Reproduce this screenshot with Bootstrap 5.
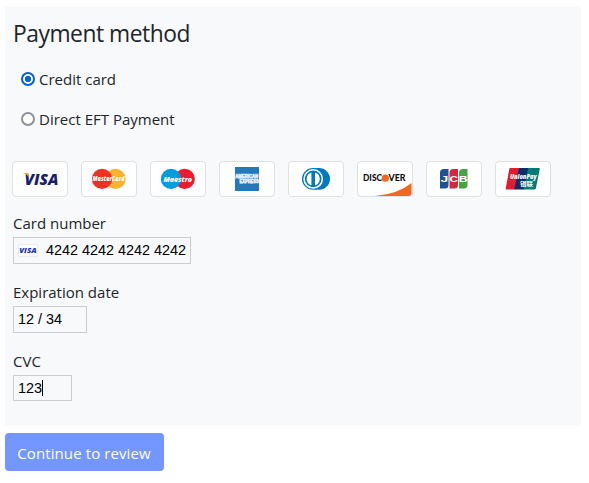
<!DOCTYPE html>
<html lang="en">
<head>
<meta charset="utf-8">
<meta name="viewport" content="width=device-width, initial-scale=1">
<title>Payment method</title>
<link href="https://cdn.jsdelivr.net/npm/bootstrap@5.3.0/dist/css/bootstrap.min.css" rel="stylesheet">
<style>
  body { font-family: "Open Sans", "Noto Sans", sans-serif; font-size: 15px; line-height: 24px; color: #212529; padding: 7px 8px 0 5px; }
  .pay-panel { height: 418px; background: #f8f9fb; padding: 0 8px; }
  .pay-title { font-size: 22.8px; line-height: 30px; padding: 12px 0 18px; font-weight: 400; letter-spacing: -.46px; }
  .pay-option { height: 24px; margin: 0 0 16px 8px; gap: 4px; }
  .pay-radio { appearance: none; width: 14px; height: 14px; border: 2px solid #8f8f9d; border-radius: 50%; background: #fff; margin: 0; }
  .pay-radio:checked { border-color: #0060df; background: radial-gradient(circle, #0060df 2.8px, #fff 3.5px); }
  .brand-row { gap: 13px; margin: 30px 0 15px -1px; height: 36px; }
  .brand-tile { width: 56px; height: 36px; background: #fff; border: 1px solid #dfe0e2; border-radius: 4px; }
  .brand-tile svg { display: block; margin: -1px; width: 56px; height: 36px; }
  .brand-text { font-family: "Open Sans", sans-serif; font-weight: 800; font-style: italic; }
  .pay-group { margin-bottom: 17px; }
  .pay-label { display: block; height: 25px; line-height: 23px; }
  .pay-field { border: 1px solid #ccc; height: 27px; padding: 0 4px; font: 14.4px/25px "Liberation Sans", Arial, sans-serif; color: #000; background: transparent; }
  .field-number { width: 178px; gap: 8px; }
  .field-expiry { width: 74px; }
  .field-cvc { width: 59px; height: 26px; }
  .text-caret { width: 1px; height: 16px; background: #000; }
  .btn-review { width: 159px; height: 38px; margin-top: 8px; padding: 3px 1px 0 0; border: 0; border-radius: 4px; background: #7496ff; color: #fff; font-size: 15px; letter-spacing: .1px; }
</style>
</head>
<body>
<main>
  <section class="pay-panel">
    <h4 class="pay-title mb-0">Payment method</h4>
    <div class="pay-option d-flex align-items-center"><input class="pay-radio" type="radio" name="method" id="m1" checked><label for="m1">Credit card</label></div>
    <div class="pay-option d-flex align-items-center mb-0"><input class="pay-radio" type="radio" name="method" id="m2"><label for="m2">Direct EFT Payment</label></div>
    <div class="brand-row d-flex">
      <div class="brand-tile"><svg viewBox="0 0 56 36"><text class="brand-text" x="12.500" y="23.800" font-size="16.300" textLength="34" lengthAdjust="spacingAndGlyphs" fill="#1a1f71">VISA</text><path d="M10.500 12h4.700q1.200 0 1.500 1.200l.6 3.600q-1.800-3.500-6.800-4.800z" fill="#f7a823"/></svg></div>
      <div class="brand-tile"><svg viewBox="0 0 56 36"><circle cx="34.500" cy="17.900" r="10.200" fill="#fbb231"/><circle cx="21" cy="17.900" r="10.200" fill="#ee3124"/><text class="brand-text" x="11.500" y="20.300" font-size="6.800" textLength="32" lengthAdjust="spacingAndGlyphs" fill="#fff">MasterCard</text></svg></div>
      <div class="brand-tile"><svg viewBox="0 0 56 36"><circle cx="34.700" cy="17.900" r="10.200" fill="#ed1b2e"/><circle cx="21" cy="17.900" r="10.200" fill="#009ddc"/><text class="brand-text" x="13.500" y="20.500" font-size="7.500" textLength="28.500" lengthAdjust="spacingAndGlyphs" fill="#fff">Maestro</text></svg></div>
      <div class="brand-tile"><svg viewBox="0 0 56 36"><path d="M16 6h24v24H16z" fill="#2478bd"/><g fill="none" stroke="#e3eef7" stroke-width=".75" font-family="Liberation Sans" font-weight="700" font-size="5"><text x="16.200" y="16.800" textLength="23" lengthAdjust="spacingAndGlyphs">AMERICAN</text><text x="20.500" y="21.500" textLength="19.300" lengthAdjust="spacingAndGlyphs">EXPRESS</text></g></svg></div>
      <div class="brand-tile"><svg viewBox="0 0 56 36"><path d="M25 7h6a11 10.900 0 0 1 0 21.800h-6a11 10.900 0 0 1 0-21.800z" fill="#0079c1"/><circle cx="25.200" cy="17.900" r="9.900" fill="#fff"/><circle cx="25.200" cy="17.900" r="8.300" fill="#0079c1"/><path d="M23.400 11.500v12.800a6.700 6.700 0 0 1 0-12.800zM27 11.500v12.800a6.700 6.700 0 0 0 0-12.800z" fill="#fff"/></svg></div>
      <div class="brand-tile"><svg viewBox="0 0 56 36"><path d="M18 35Q41 33 54.500 22v10q0 3-3 3z" fill="#f26722"/><g font-family="Lato" font-weight="900" font-size="9" fill="#111"><text x="6" y="20.400" textLength="19" lengthAdjust="spacingAndGlyphs">DISC</text><text x="31.500" y="20.400" textLength="17" lengthAdjust="spacingAndGlyphs">VER</text></g><circle cx="28.300" cy="17.200" r="3.600" fill="#f26722"/></svg></div>
      <div class="brand-tile"><svg viewBox="0 0 56 36"><path d="M18 8h4.500v16q0 3.500-3.500 3.500h-5V11.500q0-3.500 4-3.500z" fill="#205297"/><path d="M27.500 8H32v16q0 3.500-3.500 3.500h-5V11.500q0-3.500 4-3.500z" fill="#d6273b"/><path d="M37 8h4.500v16q0 3.500-3.500 3.500h-5V11.500q0-3.500 4-3.500z" fill="#45a543"/><g fill="#fff" font-family="Liberation Sans" font-weight="700" font-size="9"><text x="14.500" y="21" textLength="7.800" lengthAdjust="spacingAndGlyphs">J</text><text x="23.500" y="21" textLength="8.500" lengthAdjust="spacingAndGlyphs">C</text><text x="32.700" y="21" textLength="8.800" lengthAdjust="spacingAndGlyphs">B</text></g></svg></div>
      <div class="brand-tile"><svg viewBox="0 0 56 36"><path d="M15 7h10l-4.500 21.500H11.500q-1 0-.8-1L14.300 8q.2-1 .7-1z" fill="#e21b2d"/><path d="M25 7h9l-4.500 21.500h-9.300q-1 0-.8-1L23.700 8q.2-1 1.300-1z" fill="#0b2f6c"/><path d="M34 7h10q1 0 .8 1l-4 19.500q-.2 1-1.300 1h-9.700q-1 0-.8-1L33 8q.2-1 1-1z" fill="#017b74"/><text class="brand-text" x="15" y="17.500" font-size="6" textLength="26.500" lengthAdjust="spacingAndGlyphs" fill="#fff">UnionPay</text><text x="25" y="25" font-family="Noto Sans CJK SC" font-weight="700" font-size="5.800" textLength="13" lengthAdjust="spacingAndGlyphs" fill="#fff">银联</text></svg></div>
    </div>
    <div class="pay-group">
      <label class="pay-label">Card number</label>
      <div class="pay-field field-number d-flex align-items-center"><svg width="20" height="13" viewBox="0 0 20 13"><rect x=".5" y=".5" width="19" height="12" fill="#fff" stroke="#ececee"/><text class="brand-text" x="1.200" y="9.300" font-size="7.500" textLength="17.500" lengthAdjust="spacingAndGlyphs" fill="#2135bd">VISA</text></svg><span class="text-nowrap">4242 4242 4242 4242</span></div>
    </div>
    <div class="pay-group">
      <label class="pay-label">Expiration date</label>
      <div class="pay-field field-expiry">12 / 34</div>
    </div>
    <div class="pay-group mb-0">
      <label class="pay-label">CVC</label>
      <div class="pay-field field-cvc d-flex align-items-center">123<span class="text-caret"></span></div>
    </div>
  </section>
  <button class="btn btn-review">Continue to review</button>
</main>
<script src="https://cdn.jsdelivr.net/npm/bootstrap@5.3.0/dist/js/bootstrap.bundle.min.js"></script>
</body>
</html>
